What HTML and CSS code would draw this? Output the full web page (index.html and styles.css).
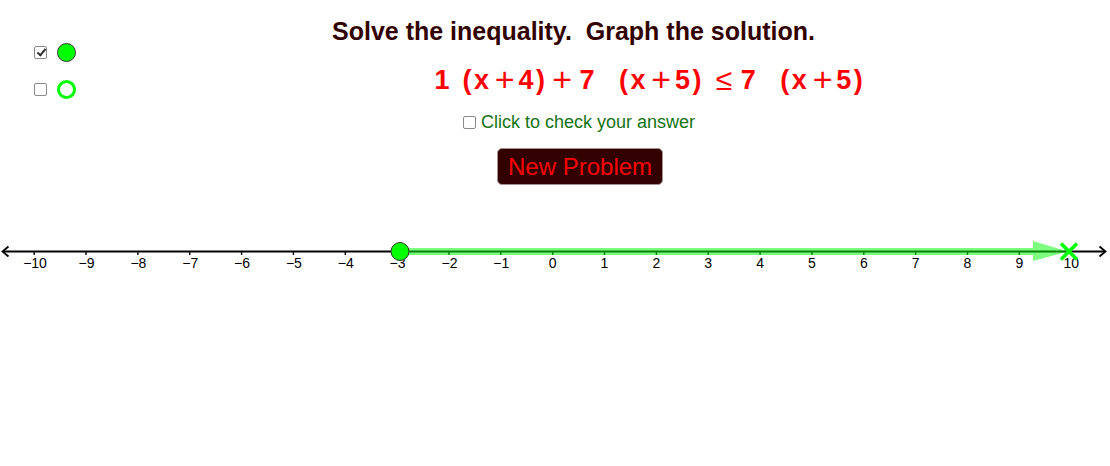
FILE: index.html
```html
<!DOCTYPE html>
<html>
<head>
<meta charset="utf-8">
<link rel="stylesheet" href="styles.css">
</head>
<body>
<div class="page">
  <div class="top">
    <div class="legend">
      <label class="legend-row"><input type="checkbox" class="cb" checked><span class="dot"></span></label>
      <label class="legend-row"><input type="checkbox" class="cb"><span class="ring"></span></label>
    </div>
    <div class="main">
      <h1 class="title">Solve the inequality.&nbsp; Graph the solution.</h1>
      <div class="eq"><span>1</span><span class="gap-first"></span><span class="lp">(</span><span>x</span><span class="op">+</span><span>4</span><span class="rp">)</span><span class="op-wide">+</span><span>7</span><span class="gap"></span><span class="lp">(</span><span>x</span><span class="op">+</span><span>5</span><span class="rp">)</span><span class="rel">≤</span><span>7</span><span class="gap"></span><span class="lp">(</span><span>x</span><span class="op">+</span><span>5</span><span class="rp">)</span></div>
      <label class="check-row"><input type="checkbox" class="cb"><span>Click to check your answer</span></label>
      <button class="new-btn">New Problem</button>
    </div>
  </div>
  <svg class="numline" width="1110" height="50" viewBox="0 0 1110 50">
    <line x1="3" y1="21.5" x2="1105" y2="21.5" stroke="#000" stroke-width="1.8"/>
    <polyline points="8.5,16.5 2.5,21.5 8.5,26.5" fill="none" stroke="#000" stroke-width="1.8"/>
    <polyline points="1099.5,16.5 1105.5,21.5 1099.5,26.5" fill="none" stroke="#000" stroke-width="1.8"/>
    <g stroke="#000" stroke-width="1.4">
      <line x1="34.2" y1="21.5" x2="34.2" y2="25"/>
      <line x1="86" y1="21.5" x2="86" y2="25"/>
      <line x1="137.9" y1="21.5" x2="137.9" y2="25"/>
      <line x1="189.7" y1="21.5" x2="189.7" y2="25"/>
      <line x1="241.6" y1="21.5" x2="241.6" y2="25"/>
      <line x1="293.4" y1="21.5" x2="293.4" y2="25"/>
      <line x1="345.3" y1="21.5" x2="345.3" y2="25"/>
      <line x1="397.1" y1="21.5" x2="397.1" y2="25"/>
      <line x1="449" y1="21.5" x2="449" y2="25"/>
      <line x1="500.8" y1="21.5" x2="500.8" y2="25"/>
      <line x1="552.7" y1="21.5" x2="552.7" y2="25"/>
      <line x1="604.5" y1="21.5" x2="604.5" y2="25"/>
      <line x1="656.4" y1="21.5" x2="656.4" y2="25"/>
      <line x1="708.2" y1="21.5" x2="708.2" y2="25"/>
      <line x1="760.1" y1="21.5" x2="760.1" y2="25"/>
      <line x1="811.9" y1="21.5" x2="811.9" y2="25"/>
      <line x1="863.8" y1="21.5" x2="863.8" y2="25"/>
      <line x1="915.6" y1="21.5" x2="915.6" y2="25"/>
      <line x1="967.5" y1="21.5" x2="967.5" y2="25"/>
      <line x1="1019.3" y1="21.5" x2="1019.3" y2="25"/>
      <line x1="1071.2" y1="21.5" x2="1071.2" y2="25"/>
    </g>
    <g class="labels" text-anchor="middle">
      <text x="35" y="38">−10</text>
      <text x="86.5" y="38">−9</text>
      <text x="138.4" y="38">−8</text>
      <text x="190.2" y="38">−7</text>
      <text x="242.1" y="38">−6</text>
      <text x="293.9" y="38">−5</text>
      <text x="345.8" y="38">−4</text>
      <text x="397.6" y="38">−3</text>
      <text x="449.5" y="38">−2</text>
      <text x="501.3" y="38">−1</text>
      <text x="552.7" y="38">0</text>
      <text x="604.5" y="38">1</text>
      <text x="656.4" y="38">2</text>
      <text x="708.2" y="38">3</text>
      <text x="760.1" y="38">4</text>
      <text x="811.9" y="38">5</text>
      <text x="863.8" y="38">6</text>
      <text x="915.6" y="38">7</text>
      <text x="967.5" y="38">8</text>
      <text x="1019.3" y="38">9</text>
      <text x="1071.2" y="38">10</text>
    </g>
    <rect x="401" y="18" width="632" height="7" fill="rgba(0,255,0,0.5)"/>
    <polygon points="1033,11 1068,21.5 1033,31" fill="rgba(0,255,0,0.5)"/>
    <g stroke="#00ff00" stroke-width="3.5" stroke-linecap="butt">
      <line x1="1061" y1="13.5" x2="1077" y2="29.5"/>
      <line x1="1061" y1="29.5" x2="1077" y2="13.5"/>
    </g>
    <circle cx="400" cy="21.5" r="9" fill="#00ff00" stroke="#333" stroke-width="1"/>
  </svg>
</div>
</body>
</html>
```

FILE: styles.css
```css
html, body {
  margin: 0;
  padding: 0;
  background: #ffffff;
}

body {
  font-family: "Liberation Sans", Arial, sans-serif;
  width: 1110px;
  height: 466px;
  overflow: hidden;
}

.page {
  display: flex;
  flex-direction: column;
  width: 1110px;
}

.top {
  display: flex;
  flex-direction: row;
  height: 185px;
}

.legend {
  width: 86px;
  padding-left: 34px;
  padding-top: 42px;
  display: flex;
  flex-direction: column;
  gap: 17px;
}

.legend-row {
  display: flex;
  align-items: center;
  gap: 10px;
  height: 20px;
}

.cb {
  -webkit-appearance: none;
  appearance: none;
  position: relative;
  margin: 0;
  width: 13px;
  height: 13px;
  box-sizing: border-box;
  border: 1px solid #8a8a8a;
  border-radius: 2px;
  background: #ffffff;
}

.cb:checked::after {
  content: "";
  position: absolute;
  left: 3.5px;
  top: 0.5px;
  width: 3px;
  height: 7px;
  border-right: 2px solid #333333;
  border-bottom: 2px solid #333333;
  transform: rotate(40deg);
}

.dot {
  width: 19px;
  height: 19px;
  box-sizing: border-box;
  border-radius: 50%;
  background: #00ff00;
  border: 1px solid #333333;
}

.ring {
  width: 19px;
  height: 19px;
  box-sizing: border-box;
  border-radius: 50%;
  border: 3.5px solid #00ff00;
  background: transparent;
}

.main {
  display: flex;
  flex-direction: column;
  align-items: flex-start;
}

.title {
  margin: 17px 0 0 212px;
  font-size: 25px;
  line-height: 28px;
  font-weight: bold;
  color: #330000;
  white-space: nowrap;
}

.eq {
  margin: 19px 0 0 314.5px;
  height: 30px;
  font-family: "Liberation Sans", Arial, sans-serif;
  font-weight: bold;
  font-size: 27px;
  line-height: 30px;
  color: #ff0000;
  white-space: nowrap;
}

.eq span {
  display: inline-block;
}

.eq .lp {
  margin-right: 2.5px;
}

.eq .rp {
  margin-left: 2.5px;
}

.eq .op,
.eq .op-wide {
  font-size: 34px;
  font-weight: normal;
  line-height: 30px;
  vertical-align: -2.5px;
}

.eq .op {
  margin: 0 3.8px 0 5.8px;
}

.eq .op-wide {
  margin: 0 7.3px 0 7.2px;
}

.eq .rel {
  font-size: 30px;
  font-weight: normal;
  line-height: 30px;
  vertical-align: -1px;
  margin: 0 8.5px 0 14.4px;
}

.eq .gap-first {
  width: 13px;
}

.eq .gap {
  width: 24.5px;
}

.check-row {
  margin: 18px 0 0 343px;
  display: flex;
  align-items: center;
  gap: 5px;
  height: 20px;
  font-size: 18px;
  line-height: 20px;
  color: #137313;
  white-space: nowrap;
}

.new-btn {
  margin: 16px 0 0 377px;
  font-family: "Liberation Sans", Arial, sans-serif;
  font-size: 24px;
  line-height: 27px;
  height: 37px;
  box-sizing: border-box;
  padding: 4px 10px;
  color: #ff0000;
  background: #330000;
  border: 1px solid #a89090;
  border-radius: 5px;
  white-space: nowrap;
}

.numline {
  display: block;
  margin-top: 45px;
}

.labels {
  font-family: "Liberation Sans", Arial, sans-serif;
  font-size: 14px;
  fill: #000000;
}
```
